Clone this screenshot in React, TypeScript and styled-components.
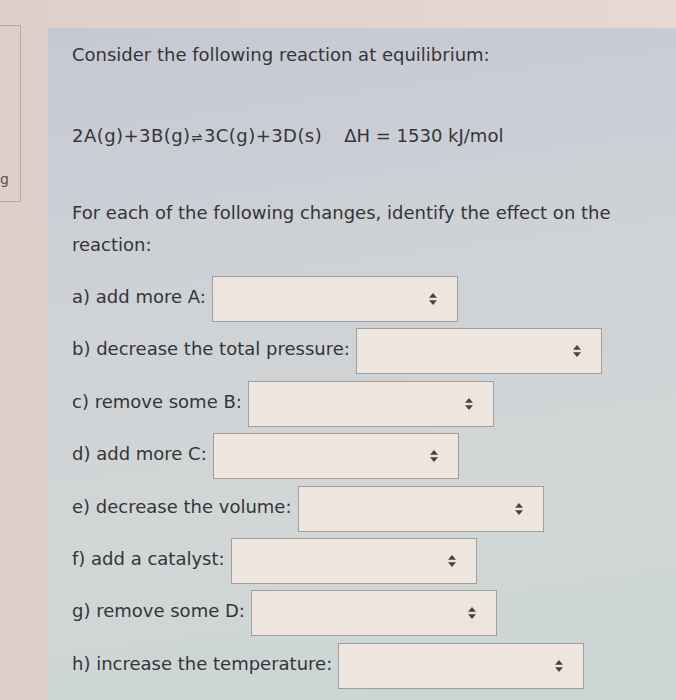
import styled, { createGlobalStyle } from "styled-components";

const GlobalStyle = createGlobalStyle`
  html, body {
    margin: 0;
    padding: 0;
    background: #e3d6cf;
  }
`;

const changes = [
  "a) add more A:",
  "b) decrease the total pressure:",
  "c) remove some B:",
  "d) add more C:",
  "e) decrease the volume:",
  "f) add a catalyst:",
  "g) remove some D:",
  "h) increase the temperature:",
];

const UpDownArrow = () => (
  <svg width="8" height="12" viewBox="0 0 8 12">
    <path d="M4 0 L8 4.8 L0 4.8 Z" fill="#444" />
    <path d="M4 12 L8 7.2 L0 7.2 Z" fill="#444" />
  </svg>
);

const App = () => {
  return (
    <Page>
      <GlobalStyle />
      <Sidebar>
        <SideTab>
          <SideGlyph>g</SideGlyph>
        </SideTab>
      </Sidebar>
      <Panel>
        <Heading>Consider the following reaction at equilibrium:</Heading>
        <Equation>
          <Formula>
            2A(g)+3B(g)<Harpoon>⇌</Harpoon>3C(g)+3D(s)
          </Formula>
          <Enthalpy>ΔH = 1530 kJ/mol</Enthalpy>
        </Equation>
        <Prompt>For each of the following changes, identify the effect on the reaction:</Prompt>
        <ChangeList>
          {changes.map((label) => (
            <ChangeRow key={label}>
              <Label>{label}</Label>
              <SelectBox role="listbox" aria-label={label}>
                <UpDownArrow />
              </SelectBox>
            </ChangeRow>
          ))}
        </ChangeList>
      </Panel>
    </Page>
  );
};

export default App;

const Page = styled.div`
  display: flex;
  width: 676px;
  height: 700px;
  overflow: hidden;
  background: linear-gradient(90deg, #ddd0cb 0%, #e6d9d1 100%);
  font-family: "DejaVu Sans", Verdana, sans-serif;
  color: #353537;
`;

const Sidebar = styled.aside`
  width: 48px;
  flex-shrink: 0;
  padding-top: 25px;
`;

const SideTab = styled.div`
  position: relative;
  width: 21px;
  height: 175px;
  margin-left: -1px;
  border: 1px solid #b9aaa5;
  border-left: none;
  overflow: hidden;
`;

const SideGlyph = styled.span`
  position: absolute;
  left: 1px;
  bottom: 14px;
  font-size: 14px;
  color: #5a5050;
`;

const Panel = styled.main`
  flex: 1;
  margin-top: 28px;
  padding: 11px 0 0 24px;
  background: linear-gradient(172deg, #c6c9d2 0%, #cfd2d6 40%, #d2d6d6 70%, #cad6d4 100%);
`;

const Heading = styled.p`
  margin: 0;
  font-size: 18px;
  line-height: 32px;
`;

const Equation = styled.p`
  margin: 49px 0 0;
  font-size: 18px;
  line-height: 32px;
`;

const Formula = styled.span`
  letter-spacing: 0.45px;
`;

const Harpoon = styled.span`
  font-size: 13px;
  margin: 0 1px;
`;

const Enthalpy = styled.span`
  margin-left: 22px;
`;

const Prompt = styled.p`
  margin: 43px 0 0;
  width: 540px;
  font-size: 18px;
  line-height: 32px;
`;

const ChangeList = styled.div`
  display: flex;
  flex-direction: column;
  gap: 6.4px;
  margin-top: 15px;
`;

const ChangeRow = styled.div`
  display: flex;
  align-items: center;
  gap: 6px;
  height: 46px;
`;

const Label = styled.span`
  font-size: 18px;
  line-height: 24px;
  margin-top: -4px;
`;

const SelectBox = styled.div`
  display: flex;
  align-items: center;
  justify-content: flex-end;
  box-sizing: border-box;
  width: 246px;
  height: 46px;
  padding-right: 20px;
  background: #eee5df;
  border: 1px solid #9e9e9e;
`;
